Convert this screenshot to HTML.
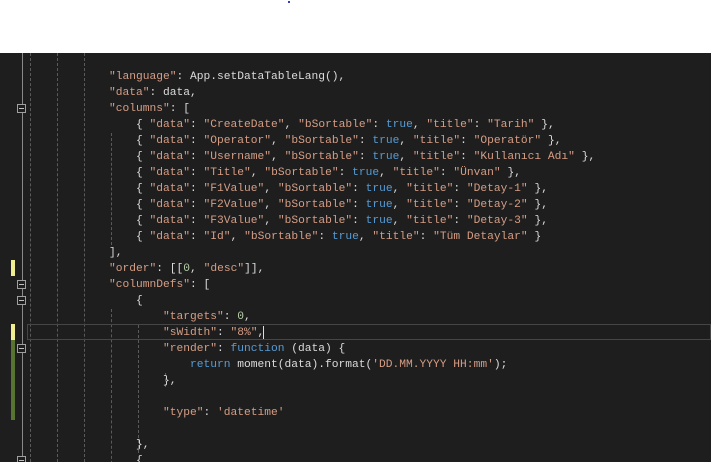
<!DOCTYPE html>
<html><head><meta charset="utf-8"><style>
body{margin:0;width:711px;height:462px;overflow:hidden;background:#fff;position:relative;font-family:"Liberation Mono",monospace;}
#ed{position:absolute;left:0;top:53px;width:711px;height:409px;background:#1e1e1e;overflow:hidden}
.r{position:absolute;left:0;height:16px;line-height:16px;white-space:pre;font-size:11.25px;color:#dcdcdc;margin-top:2px}
.s{color:#d69d85}.k{color:#569cd6}.n{color:#b5cea8}
.g{position:absolute;top:0;height:409px;border-left:1px dashed #5a5a5a}
.fold{position:absolute;left:17px;width:9px;height:9px;border:1px solid #a0a0a0;background:#1e1e1e;box-sizing:border-box}
.fold:after{content:"";position:absolute;left:1px;top:3px;width:5px;height:1px;background:#c0c0c0}
</style></head><body>
<div style="position:absolute;left:288px;top:1px;width:2px;height:2px;background:#3040c0"></div>
<div id="ed">
<div style="position:absolute;left:22px;top:0;width:1px;height:409px;background:#8a8a8a"></div>
<div class="g" style="left:30px"></div>
<div class="g" style="left:57px"></div>
<div class="g" style="left:84px"></div>
<div class="g" style="left:111px;top:80px;height:112px"></div>
<div class="g" style="left:111px;top:256px;height:160px"></div>
<div class="g" style="left:138px;top:272px;height:128px"></div>
<div class="g" style="left:165px;top:320px;height:14px"></div>
<div style="position:absolute;left:27px;top:271px;width:684px;height:16px;border:1px solid #464646;box-sizing:border-box"></div>
<div style="position:absolute;left:11px;top:207px;width:4px;height:16px;background:#efef90"></div>
<div style="position:absolute;left:11px;top:271px;width:4px;height:16px;background:#efef90"></div>
<div style="position:absolute;left:11px;top:287px;width:4px;height:80px;background:#577430"></div>
<div class="fold" style="top:51px"></div>
<div class="fold" style="top:227px"></div>
<div class="fold" style="top:243px"></div>
<div class="fold" style="top:291px"></div>
<div class="fold" style="top:403px"></div>
<div style="position:absolute;left:263px;top:273px;width:1px;height:13px;background:#dcdcdc"></div>
<div class="r" style="top:14px;left:109px"><span class="s">"language"</span>: App.setDataTableLang(),</div>
<div class="r" style="top:30px;left:109px"><span class="s">"data"</span>: data,</div>
<div class="r" style="top:46px;left:109px"><span class="s">"columns"</span>: [</div>
<div class="r" style="top:62px;left:136px">{ <span class="s">"data"</span>: <span class="s">"CreateDate"</span>, <span class="s">"bSortable"</span>: <span class="k">true</span>, <span class="s">"title"</span>: <span class="s">"Tarih"</span> },</div>
<div class="r" style="top:78px;left:136px">{ <span class="s">"data"</span>: <span class="s">"Operator"</span>, <span class="s">"bSortable"</span>: <span class="k">true</span>, <span class="s">"title"</span>: <span class="s">"Operatör"</span> },</div>
<div class="r" style="top:94px;left:136px">{ <span class="s">"data"</span>: <span class="s">"Username"</span>, <span class="s">"bSortable"</span>: <span class="k">true</span>, <span class="s">"title"</span>: <span class="s">"Kullanıcı Adı"</span> },</div>
<div class="r" style="top:110px;left:136px">{ <span class="s">"data"</span>: <span class="s">"Title"</span>, <span class="s">"bSortable"</span>: <span class="k">true</span>, <span class="s">"title"</span>: <span class="s">"Ünvan"</span> },</div>
<div class="r" style="top:126px;left:136px">{ <span class="s">"data"</span>: <span class="s">"F1Value"</span>, <span class="s">"bSortable"</span>: <span class="k">true</span>, <span class="s">"title"</span>: <span class="s">"Detay-1"</span> },</div>
<div class="r" style="top:142px;left:136px">{ <span class="s">"data"</span>: <span class="s">"F2Value"</span>, <span class="s">"bSortable"</span>: <span class="k">true</span>, <span class="s">"title"</span>: <span class="s">"Detay-2"</span> },</div>
<div class="r" style="top:158px;left:136px">{ <span class="s">"data"</span>: <span class="s">"F3Value"</span>, <span class="s">"bSortable"</span>: <span class="k">true</span>, <span class="s">"title"</span>: <span class="s">"Detay-3"</span> },</div>
<div class="r" style="top:174px;left:136px">{ <span class="s">"data"</span>: <span class="s">"Id"</span>, <span class="s">"bSortable"</span>: <span class="k">true</span>, <span class="s">"title"</span>: <span class="s">"Tüm Detaylar"</span> }</div>
<div class="r" style="top:190px;left:109px">],</div>
<div class="r" style="top:206px;left:109px"><span class="s">"order"</span>: [[<span class="n">0</span>, <span class="s">"desc"</span>]],</div>
<div class="r" style="top:222px;left:109px"><span class="s">"columnDefs"</span>: [</div>
<div class="r" style="top:238px;left:136px">{</div>
<div class="r" style="top:254px;left:163px"><span class="s">"targets"</span>: <span class="n">0</span>,</div>
<div class="r" style="top:270px;left:163px"><span class="s">"sWidth"</span>: <span class="s">"8%"</span>,</div>
<div class="r" style="top:286px;left:163px"><span class="s">"render"</span>: <span class="k">function</span> (data) {</div>
<div class="r" style="top:302px;left:190px"><span class="k">return</span> moment(data).format(<span class="s">'DD.MM.YYYY HH:mm'</span>);</div>
<div class="r" style="top:318px;left:163px">},</div>
<div class="r" style="top:350px;left:163px"><span class="s">"type"</span>: <span class="s">'datetime'</span></div>
<div class="r" style="top:382px;left:136px">},</div>
<div class="r" style="top:398px;left:136px">{</div>
</div>
</body></html>
